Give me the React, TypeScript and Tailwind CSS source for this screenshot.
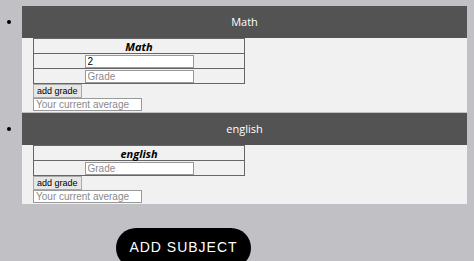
import { useState } from "react"

type Subject = { name: string; grades: string[] }

const initial: Subject[] = [
  { name: "Math", grades: ["2"] },
  { name: "english", grades: [] },
]

function SubjectCard({ subject }: { subject: Subject }) {
  return (
    <li className="mb-[1px] text-[11px]">
      <div className="h-[32px] pt-[1px] bg-[#535353] text-white flex items-center justify-center text-[11px] font-['Open_Sans',sans-serif]">
        {subject.name}
      </div>
      <div className="bg-[#f1f1f1] pl-[11px] pb-[1px]">
        <table className="w-[212px] border-collapse border border-[#666] font-['Open_Sans',sans-serif]">
          <thead>
            <tr className="h-[15px]">
              <th className="border border-[#666] text-[11px] font-bold italic text-black leading-[13px] p-0">
                {subject.name}
              </th>
            </tr>
          </thead>
          <tbody>
            {subject.grades.map((g, i) => (
              <tr key={i} className="h-[15px]">
                <td className="border border-[#666] p-0 text-center leading-[0]">
                  <input
                    defaultValue={g}
                    className="w-[109px] h-[13px] border border-[#999] bg-white px-[2px] text-[10px] text-black font-['Liberation_Sans',sans-serif] outline-none"
                  />
                </td>
              </tr>
            ))}
            <tr className="h-[15px]">
              <td className="border border-[#666] p-0 text-center leading-[0]">
                <input
                  placeholder="Grade"
                  className="w-[109px] h-[13px] border border-[#999] bg-white px-[2px] text-[10px] text-black placeholder:text-[#8a8a8a] font-['Liberation_Sans',sans-serif] outline-none"
                />
              </td>
            </tr>
          </tbody>
        </table>
        <button className="block h-[14px] px-[3px] whitespace-nowrap border border-[#aaa] bg-[#e6e6e6] text-[9px] leading-[12px] text-black font-['Liberation_Sans',sans-serif]">
          add grade
        </button>
        <input
          placeholder="Your current average"
          className="block w-[109px] h-[13px] border border-[#999] bg-white px-[2px] text-[10px] text-black placeholder:text-[#8a8a8a] font-['Liberation_Sans',sans-serif] outline-none"
        />
      </div>
    </li>
  )
}

export default function App() {
  const [subjects] = useState(initial)

  return (
    <div className="min-h-screen bg-[#c1c0c5] pt-[6px]">
      <ul className="list-disc pl-[22px] pr-[7px]">
        {subjects.map((s) => (
          <SubjectCard key={s.name} subject={s} />
        ))}
      </ul>
      <div className="pl-[116px] mt-[24px]">
        <button className="h-[40px] w-[135px] rounded-full bg-black text-white text-[14px] tracking-[1px] font-['Liberation_Sans',sans-serif] pb-[2px]">
          ADD SUBJECT
        </button>
      </div>
    </div>
  )
}
